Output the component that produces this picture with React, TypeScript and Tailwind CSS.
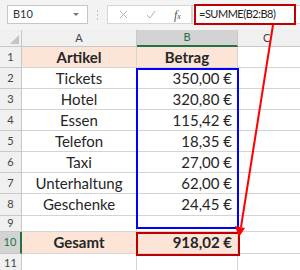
import React from "react";

const rows = [
  { n: 1, a: "Artikel", b: "Betrag", head: true },
  { n: 2, a: "Tickets", b: "350,00 €" },
  { n: 3, a: "Hotel", b: "320,80 €" },
  { n: 4, a: "Essen", b: "115,42 €" },
  { n: 5, a: "Telefon", b: "18,35 €" },
  { n: 6, a: "Taxi", b: "27,00 €" },
  { n: 7, a: "Unterhaltung", b: "62,00 €" },
  { n: 8, a: "Geschenke", b: "24,45 €" },
];

function RowNum({ n, active }: { n: number; active?: boolean }) {
  return (
    <div
      className={
        active
          ? "flex items-center justify-center bg-[#d3d3d3] border-r-2 border-r-[#217346] border-b border-b-[#c8c8c8] text-[11px] text-[#217346]"
          : "flex items-center justify-center bg-[#f0f0f0] border-r border-b border-[#c8c8c8] text-[11px] text-[#444]"
      }
    >
      {n}
    </div>
  );
}

export default function App() {
  return (
    <div className="relative w-[300px] h-[270px] overflow-hidden bg-white font-['Lato',sans-serif] text-[#262626]">
      {/* formula bar */}
      <div className="h-[30px] bg-[#f3f3f3] flex items-start pt-[5px] pl-[7px]">
        <div className="w-[81px] h-[19px] bg-white border border-[#c6c6c6] flex items-center justify-between pl-[5px] pr-[8px]">
          <span className="text-[11px] text-[#333]">B10</span>
          <span className="w-0 h-0 border-l-[3px] border-r-[3px] border-t-[3px] border-l-transparent border-r-transparent border-t-[#777]" />
        </div>
        <div className="w-[19px] h-[19px] flex flex-col items-center justify-center gap-[2px]">
          <span className="w-[1px] h-[2px] bg-[#c0c0c0]" />
          <span className="w-[1px] h-[2px] bg-[#c0c0c0]" />
          <span className="w-[1px] h-[2px] bg-[#c0c0c0]" />
        </div>
        <div className="w-[85px] h-[19px] bg-white border border-[#d6d6d6] flex items-center pl-[11px] gap-[18px]">
          <svg width="9" height="9" viewBox="0 0 9 9">
            <path d="M1 1L8 8M8 1L1 8" stroke="#b0b0b0" strokeWidth="1" />
          </svg>
          <svg width="10" height="9" viewBox="0 0 10 9">
            <path d="M1 5L4 8L9 1" stroke="#b0b0b0" strokeWidth="1" fill="none" />
          </svg>
          <span className="font-['Liberation_Serif',serif] italic text-[12px] text-[#555] leading-none">
            f<span className="text-[8px]">x</span>
          </span>
        </div>
        <div className="flex-1 h-[19px] bg-white border-y border-l border-[#d6d6d6] flex items-center pl-[6px]">
          <span className="text-[11px] tracking-[-0.5px] text-[#222]">=SUMME(B2:B8)</span>
        </div>
      </div>

      {/* sheet */}
      <div className="grid grid-cols-[22px_115px_101px_1fr] grid-rows-[17px_21px_21px_21px_21px_21px_21px_21px_22px_16px_22px_20px]">
        <div className="bg-[#f0f0f0] border-r border-b border-[#c8c8c8] flex items-end justify-end p-[2px]">
          <svg width="9" height="9" viewBox="0 0 9 9">
            <polygon points="9,0 9,9 0,9" fill="#c4c4c4" />
          </svg>
        </div>
        <div className="bg-[#f0f0f0] border-r border-b border-[#c8c8c8] flex items-center justify-center text-[11px] text-[#444]">A</div>
        <div className="bg-[#d3d3d3] border-r border-[#c8c8c8] border-b-2 border-b-[#217346] flex items-center justify-center text-[11px] text-[#217346]">B</div>
        <div className="bg-[#f0f0f0] border-b border-[#c8c8c8] flex items-center justify-start pl-[25px] text-[11px] text-[#444]">C</div>

        {rows.map((r) => (
          <React.Fragment key={r.n}>
            <RowNum n={r.n} />
            <div
              className={`flex items-center justify-center border-r border-b border-[#d4d4d4] text-[15px] ${
                r.head ? "bg-[#fce4d6] font-bold" : ""
              }`}
            >
              {r.a}
            </div>
            <div
              className={`flex items-center border-r border-b border-[#d4d4d4] text-[15px] ${
                r.head ? "bg-[#fce4d6] font-bold justify-center" : "justify-end pr-[5px]"
              }`}
            >
              {r.b}
            </div>
            <div className="border-b border-[#d4d4d4]" />
          </React.Fragment>
        ))}

        <RowNum n={9} />
        <div className="border-r border-b border-[#d4d4d4]" />
        <div className="border-r border-b border-[#d4d4d4]" />
        <div className="border-b border-[#d4d4d4]" />

        <RowNum n={10} active />
        <div className="flex items-center justify-center bg-[#fce4d6] border-r border-b border-[#d4d4d4] text-[15px] font-bold">
          Gesamt
        </div>
        <div className="flex items-center justify-end pr-[5px] bg-[#fce4d6] border-r border-b border-[#d4d4d4] text-[15px] font-bold">
          918,02 €
        </div>
        <div className="border-b border-[#d4d4d4]" />

        <RowNum n={11} />
        <div className="border-r border-b border-[#d4d4d4]" />
        <div className="border-r border-b border-[#d4d4d4]" />
        <div className="border-b border-[#d4d4d4]" />
      </div>

      {/* annotations */}
      <div className="absolute left-[194px] top-[4px] w-[102px] h-[21px] border-2 border-[#c00000]" />
      <div className="absolute left-[136px] top-[68px] w-[103px] h-[161px] border-2 border-[#0000ff]" />
      <div className="absolute left-[136px] top-[232px] w-[104px] h-[24px] border-2 border-[#c00000]" />
      <svg className="absolute left-0 top-0" width="300" height="270">
        <line x1="273" y1="25" x2="241" y2="227" stroke="#ff0000" strokeWidth="2" />
        <polygon points="235,226 245,228 239,237" fill="#ff0000" />
      </svg>
    </div>
  );
}
